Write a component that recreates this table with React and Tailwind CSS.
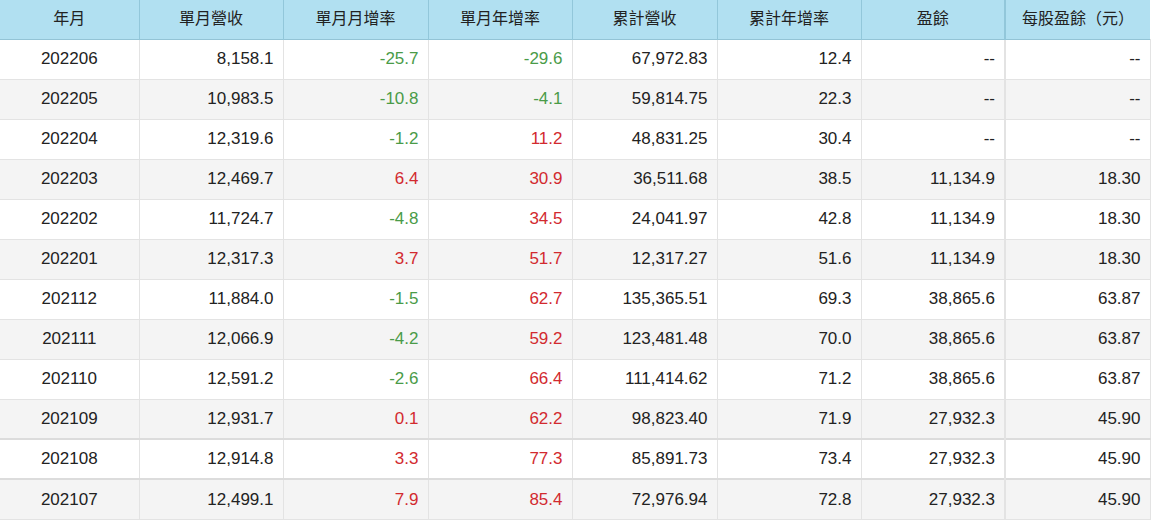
const headers = ['年月', '單月營收', '單月月增率', '單月年增率', '累計營收', '累計年增率', '盈餘', '每股盈餘（元）'];

const rows = [
    ['202206', '8,158.1', '-25.7', '-29.6', '67,972.83', '12.4', '--', '--'],
    ['202205', '10,983.5', '-10.8', '-4.1', '59,814.75', '22.3', '--', '--'],
    ['202204', '12,319.6', '-1.2', '11.2', '48,831.25', '30.4', '--', '--'],
    ['202203', '12,469.7', '6.4', '30.9', '36,511.68', '38.5', '11,134.9', '18.30'],
    ['202202', '11,724.7', '-4.8', '34.5', '24,041.97', '42.8', '11,134.9', '18.30'],
    ['202201', '12,317.3', '3.7', '51.7', '12,317.27', '51.6', '11,134.9', '18.30'],
    ['202112', '11,884.0', '-1.5', '62.7', '135,365.51', '69.3', '38,865.6', '63.87'],
    ['202111', '12,066.9', '-4.2', '59.2', '123,481.48', '70.0', '38,865.6', '63.87'],
    ['202110', '12,591.2', '-2.6', '66.4', '111,414.62', '71.2', '38,865.6', '63.87'],
    ['202109', '12,931.7', '0.1', '62.2', '98,823.40', '71.9', '27,932.3', '45.90'],
    ['202108', '12,914.8', '3.3', '77.3', '85,891.73', '73.4', '27,932.3', '45.90'],
    ['202107', '12,499.1', '7.9', '85.4', '72,976.94', '72.8', '27,932.3', '45.90'],
];

const widths = ['w-[139px]', 'w-[144px]', 'w-[145px]', 'w-[144px]', 'w-[145px]', 'w-[144px]', 'w-[144px]', 'w-[145px]'];

function rateColor(v) {
    return v.startsWith('-') ? 'text-[#4a9b48]' : 'text-[#d22a2f]';
}

export default function App() {
    return (
        <div className="w-[1152px] h-[521px] overflow-hidden bg-white" style={{ fontFamily: '"Liberation Sans", Arial, "Noto Sans CJK TC", sans-serif' }}>
            <table className="w-[1150px] border-collapse table-fixed text-[17px] text-[#222]">
                <thead>
                    <tr className="h-[39px] bg-[#b1e0f1] border-b border-[#93c4d6]">
                        {headers.map((h, i) => (
                            <th
                                key={h}
                                className={`${widths[i]} font-normal text-[16px] text-[#222] text-center ${i < 7 ? 'border-r border-[#92c7da]' : ''} ${i === 6 ? 'border-r-2' : ''}`}
                            >
                                {h}
                            </th>
                        ))}
                    </tr>
                </thead>
                <tbody>
                    {rows.map((r, ri) => (
                        <tr
                            key={r[0]}
                            className={`h-[40px] border-b ${ri === 9 || ri === 10 ? 'border-b-2 border-[#dcdcdc]' : 'border-[#e3e3e3]'} ${ri % 2 ? 'bg-[#f4f4f4]' : 'bg-white'}`}
                        >
                            {r.map((c, ci) => (
                                <td
                                    key={ci}
                                    className={`${ci === 0 ? 'text-center' : 'text-right pr-[9px]'} border-r border-[#e3e3e3] ${ci === 6 ? 'border-r-2' : ''} ${ci === 2 || ci === 3 ? rateColor(c) : ''}`}
                                >
                                    {c}
                                </td>
                            ))}
                        </tr>
                    ))}
                </tbody>
            </table>
        </div>
    );
}
